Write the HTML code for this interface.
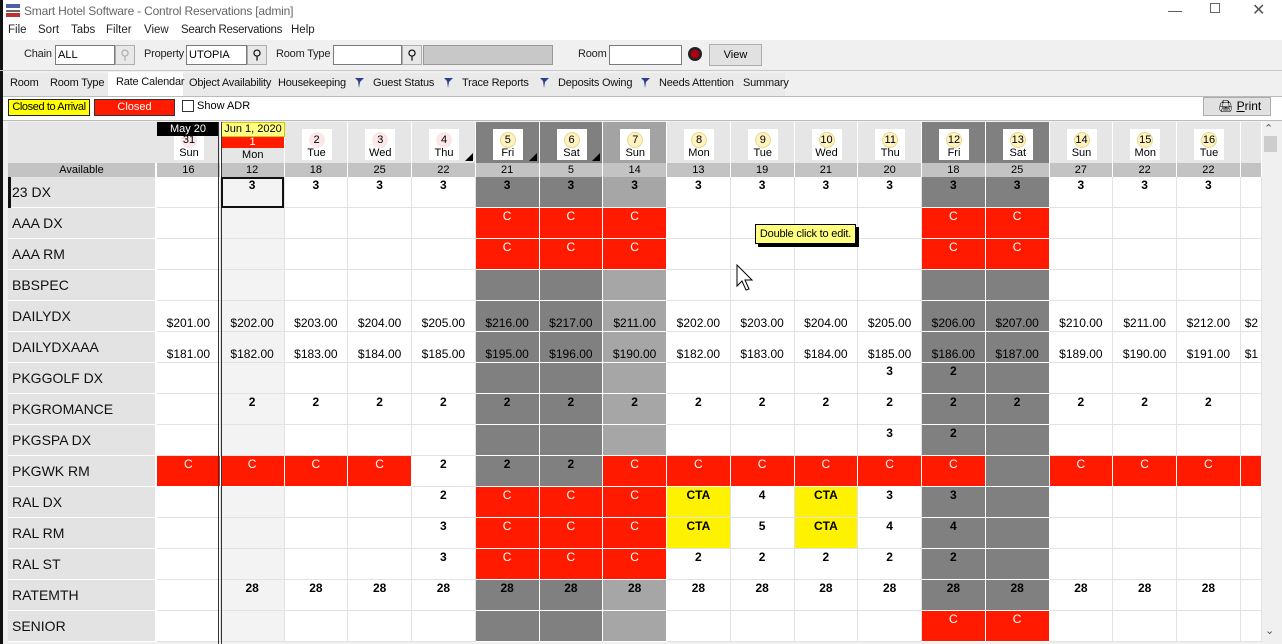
<!DOCTYPE html>
<html><head><meta charset="utf-8"><style>
*{box-sizing:border-box;margin:0;padding:0}
body{width:1282px;height:644px;overflow:hidden;background:#f0f0f0;font-family:"Liberation Sans",sans-serif;font-size:12px;color:#000;position:relative}
.a{position:absolute;white-space:nowrap}
#title{left:0;top:0;width:1282px;height:40px;background:#fff}
#lb{left:0;top:0;width:3px;height:644px;background:#111}
.tb{font-size:11px;color:#222;letter-spacing:-0.2px}
.mn{font-size:11.5px;color:#222;top:24px}
.inp{position:absolute;background:#fff;border:1px solid #7a7a7a;height:20px;font-size:11px;padding:3px 2px}
.sb{position:absolute;width:20px;height:20px;border:1px solid #adadad;background:#e8e8e8;font-size:13px;text-align:center;line-height:18px}
.tab{position:absolute;top:77px;font-size:11px;color:#111;letter-spacing:-0.2px;white-space:nowrap}
.fl{position:absolute;top:78px}
#grid{left:8px;top:177px;width:1254px}
.r{display:flex;height:31px}
.r>*{flex:none;width:63.75px;height:31px;border-right:1px solid #e2e2e2;border-bottom:1px solid #e2e2e2;text-align:center;font-style:normal;font-weight:bold;font-size:12px;padding-top:1px;background:#fff;white-space:nowrap}
.r>b{width:149px;text-align:left;font-weight:normal;font-size:14px;background:#e3e3e3;padding:7px 0 0 4px;border-right:2px solid #fff;border-bottom:1px solid #fff;color:#111}
.r>*:nth-child(3){background:#f3f3f3}
.r>*:nth-child(7),.r>*:nth-child(8),.r>*:nth-child(14),.r>*:nth-child(15){background:#808080;border-color:#fff}
.r>*:nth-child(9){background:#a6a6a6;border-color:#fff}
.r>*:nth-child(19){width:21px}
.r>i.c{background:#ff1a00!important;color:#fff;font-weight:normal;border-color:#fff}
.r>i.y{background:#fff200!important}
.p>i{font-weight:normal;padding-top:15px}
#hdr{left:157px;top:122px;display:flex}
#hdr>div{flex:none;width:63.75px;height:41px;background:#e6e6e6;border-right:1px solid #fff;position:relative;text-align:center;font-size:11px}
#hdr .d{background:#808080}
#hdr .m{background:#a3a3a3}
.ic{position:absolute;left:17px;top:7px;width:30px;height:31px;background:#fff}
.ic span{position:absolute;left:7px;top:3px;width:16px;height:16px;border-radius:50%;background:#fbe7e7}
.sun span{background:#fdf2c0;border:1px solid #e8d890}
.ic em{position:absolute;left:0;width:30px;top:6px;font-style:normal;font-size:11px;line-height:11px}
.ic u{position:absolute;left:0;width:30px;top:18px;text-decoration:none;font-size:11px}
.tri{position:absolute;right:2px;bottom:2px;width:0;height:0;border-left:8px solid transparent;border-bottom:8px solid #000}
#av{left:8px;top:163px;display:flex;height:14px}
#av>div{flex:none;width:63.75px;background:#c3c3c3;border-right:1px solid #fff;text-align:center;font-size:11px;line-height:14px}
#av>div:first-child{width:149px;border-right:2px solid #fff}
</style></head><body>
<div class="a" id="title"></div>
<div class="a" id="lb"></div>
<div class="a" style="left:6px;top:4px;width:14px;height:13px;background:linear-gradient(#4a5fa8 0 30%,#fff 30% 45%,#6a6a6a 45% 60%,#fff 60% 70%,#c03030 70%)"></div>
<div class="a" style="left:24px;top:4px;font-size:12px;color:#666;letter-spacing:-0.2px">Smart Hotel Software - Control Reservations [admin]</div>
<div class="a" style="left:1168px;top:2px;font-size:14px;color:#555">&#8212;</div>
<div class="a" style="left:1210px;top:3px;width:10px;height:10px;border:1px solid #666"></div>
<div class="a" style="left:1252px;top:0px;font-size:16px;color:#555">&#10005;</div>
<div class="a mn" style="left:8px">File</div>
<div class="a mn" style="left:38px">Sort</div>
<div class="a mn" style="left:71px">Tabs</div>
<div class="a mn" style="left:106px">Filter</div>
<div class="a mn" style="left:144px">View</div>
<div class="a mn" style="left:181px;letter-spacing:-0.3px">Search Reservations</div>
<div class="a mn" style="left:291px">Help</div>
<div class="a" style="left:0;top:70px;width:1282px;height:1px;background:#c8c8c8"></div>
<div class="a tb" style="left:24px;top:48px">Chain</div>
<div class="inp" style="left:55px;top:45px;width:60px">ALL</div>
<div class="sb" style="left:115px;top:45px;color:#aaa">&#9906;</div>
<div class="a tb" style="left:144px;top:48px">Property</div>
<div class="inp" style="left:186px;top:45px;width:61px">UTOPIA</div>
<div class="sb" style="left:247px;top:45px">&#9906;</div>
<div class="a tb" style="left:276px;top:48px">Room Type</div>
<div class="inp" style="left:333px;top:45px;width:69px"></div>
<div class="sb" style="left:402px;top:45px">&#9906;</div>
<div class="a" style="left:423px;top:45px;width:130px;height:20px;background:#c8c8c8;border:1px solid #999"></div>
<div class="a tb" style="left:578px;top:48px">Room</div>
<div class="inp" style="left:609px;top:45px;width:73px"></div>
<div class="a" style="left:688px;top:47px;width:14px;height:14px;border-radius:50%;background:radial-gradient(#b00010 40%,#222 45%)"></div>
<div class="a" style="left:709px;top:44px;width:53px;height:22px;background:#e1e1e1;border:1px solid #adadad;text-align:center;line-height:20px;font-size:11px">View</div>
<div class="a" style="left:3px;top:73px;width:782px;height:23px;background:#eaeaea"></div>
<div class="a" style="left:108px;top:72px;width:75px;height:25px;background:#fff"></div>
<div class="tab" style="left:10px">Room</div>
<div class="tab" style="left:50px">Room Type</div>
<div class="tab" style="left:116px;top:76px">Rate Calendar</div>
<div class="tab" style="left:189px">Object Availability</div>
<div class="tab" style="left:278px">Housekeeping</div>
<svg class="fl" style="left:355px" width="9" height="10"><path d="M0 0 L9 0 L5 4 L4 10 L3 3 Z" fill="#2a3f8f"/></svg>
<div class="tab" style="left:373px">Guest Status</div>
<svg class="fl" style="left:444px" width="9" height="10"><path d="M0 0 L9 0 L5 4 L4 10 L3 3 Z" fill="#2a3f8f"/></svg>
<div class="tab" style="left:462px">Trace Reports</div>
<svg class="fl" style="left:540px" width="9" height="10"><path d="M0 0 L9 0 L5 4 L4 10 L3 3 Z" fill="#2a3f8f"/></svg>
<div class="tab" style="left:558px">Deposits Owing</div>
<svg class="fl" style="left:641px" width="9" height="10"><path d="M0 0 L9 0 L5 4 L4 10 L3 3 Z" fill="#2a3f8f"/></svg>
<div class="tab" style="left:659px">Needs Attention</div>
<div class="tab" style="left:743px">Summary</div>
<div class="a" style="left:3px;top:96px;width:1279px;height:1px;background:#bbb"></div>
<div class="a" style="left:3px;top:97px;width:1279px;height:24px;background:#fff"></div>
<div class="a" style="left:8px;top:99px;width:82px;height:17px;background:#ffff00;border:1px solid #222;font-size:11px;text-align:center;line-height:15px;letter-spacing:-0.4px">Closed to Arrival</div>
<div class="a" style="left:94px;top:99px;width:81px;height:17px;background:#ff1a00;border:1px solid #333;font-size:11px;text-align:center;line-height:15px;color:#fff">Closed</div>
<div class="a" style="left:182px;top:100px;width:12px;height:12px;border:1px solid #333;background:#fff"></div>
<div class="a" style="left:197px;top:100px;font-size:11px">Show ADR</div>
<div class="a" style="left:1203px;top:97px;width:68px;height:19px;background:#e1e1e1;border:1px solid #adadad;font-size:12px;line-height:17px;padding-left:14px">&#128424; <u>P</u>rint</div>
<div class="a" style="left:3px;top:120px;width:1279px;height:1px;background:#bbb"></div>
<div class="a" style="left:8px;top:122px;width:149px;height:41px;background:#e6e6e6"></div>

<div class="a" id="hdr">
<div><div class="ic"><span></span><em>31</em><u>Sun</u></div></div>
<div><div class="ic" style="background:transparent"><u style="top:20px">Mon</u></div></div>
<div><div class="ic"><span></span><em>2</em><u>Tue</u></div></div>
<div><div class="ic"><span></span><em>3</em><u>Wed</u></div></div>
<div><div class="ic"><span></span><em>4</em><u>Thu</u></div><i class="tri"></i></div>
<div class="d"><div class="ic sun"><span></span><em>5</em><u>Fri</u></div><i class="tri"></i></div>
<div class="d"><div class="ic sun"><span></span><em>6</em><u>Sat</u></div><i class="tri"></i></div>
<div class="m"><div class="ic sun"><span></span><em>7</em><u>Sun</u></div></div>
<div><div class="ic sun"><span></span><em>8</em><u>Mon</u></div></div>
<div><div class="ic sun"><span></span><em>9</em><u>Tue</u></div></div>
<div><div class="ic sun"><span></span><em>10</em><u>Wed</u></div></div>
<div><div class="ic sun"><span></span><em>11</em><u>Thu</u></div></div>
<div class="d"><div class="ic sun"><span></span><em>12</em><u>Fri</u></div></div>
<div class="d"><div class="ic sun"><span></span><em>13</em><u>Sat</u></div></div>
<div><div class="ic sun"><span></span><em>14</em><u>Sun</u></div></div>
<div><div class="ic sun"><span></span><em>15</em><u>Mon</u></div></div>
<div><div class="ic sun"><span></span><em>16</em><u>Tue</u></div></div>
<div style="width:21px"></div>
</div>
<div class="a" style="left:157px;top:122px;width:62px;height:14px;background:#000;color:#fff;font-size:11px;text-align:center;line-height:14px">May 20</div>
<div class="a" style="left:221px;top:122px;width:64px;height:15px;background:#ffff80;border:1px solid #cc0;font-size:11px;text-align:center;line-height:13px">Jun 1, 2020</div>
<div class="a" style="left:221px;top:137px;width:63px;height:11px;background:#ff1a00;color:#fff;font-size:11px;text-align:center;line-height:11px">1</div>

<div class="a" id="av"><div>Available</div><div>16</div><div>12</div><div>18</div><div>25</div><div>22</div><div>21</div><div>5</div><div>14</div><div>13</div><div>19</div><div>21</div><div>20</div><div>18</div><div>25</div><div>27</div><div>22</div><div>22</div><div style="width:21px"></div></div>

<div class="a" id="grid">
<div class="r"><b>23 DX</b><i></i><i>3</i><i>3</i><i>3</i><i>3</i><i>3</i><i>3</i><i>3</i><i>3</i><i>3</i><i>3</i><i>3</i><i>3</i><i>3</i><i>3</i><i>3</i><i>3</i><i></i></div>
<div class="r"><b>AAA DX</b><i></i><i></i><i></i><i></i><i></i><i class="c">C</i><i class="c">C</i><i class="c">C</i><i></i><i></i><i></i><i></i><i class="c">C</i><i class="c">C</i><i></i><i></i><i></i><i></i></div>
<div class="r"><b>AAA RM</b><i></i><i></i><i></i><i></i><i></i><i class="c">C</i><i class="c">C</i><i class="c">C</i><i></i><i></i><i></i><i></i><i class="c">C</i><i class="c">C</i><i></i><i></i><i></i><i></i></div>
<div class="r"><b>BBSPEC</b><i></i><i></i><i></i><i></i><i></i><i></i><i></i><i></i><i></i><i></i><i></i><i></i><i></i><i></i><i></i><i></i><i></i><i></i></div>
<div class="r p"><b>DAILYDX</b><i>$201.00</i><i>$202.00</i><i>$203.00</i><i>$204.00</i><i>$205.00</i><i>$216.00</i><i>$217.00</i><i>$211.00</i><i>$202.00</i><i>$203.00</i><i>$204.00</i><i>$205.00</i><i>$206.00</i><i>$207.00</i><i>$210.00</i><i>$211.00</i><i>$212.00</i><i style="text-align:left;overflow:hidden;padding-left:4px">$2</i></div>
<div class="r p"><b>DAILYDXAAA</b><i>$181.00</i><i>$182.00</i><i>$183.00</i><i>$184.00</i><i>$185.00</i><i>$195.00</i><i>$196.00</i><i>$190.00</i><i>$182.00</i><i>$183.00</i><i>$184.00</i><i>$185.00</i><i>$186.00</i><i>$187.00</i><i>$189.00</i><i>$190.00</i><i>$191.00</i><i style="text-align:left;overflow:hidden;padding-left:4px">$1</i></div>
<div class="r"><b>PKGGOLF DX</b><i></i><i></i><i></i><i></i><i></i><i></i><i></i><i></i><i></i><i></i><i></i><i>3</i><i>2</i><i></i><i></i><i></i><i></i><i></i></div>
<div class="r"><b>PKGROMANCE</b><i></i><i>2</i><i>2</i><i>2</i><i>2</i><i>2</i><i>2</i><i>2</i><i>2</i><i>2</i><i>2</i><i>2</i><i>2</i><i>2</i><i>2</i><i>2</i><i>2</i><i></i></div>
<div class="r"><b>PKGSPA DX</b><i></i><i></i><i></i><i></i><i></i><i></i><i></i><i></i><i></i><i></i><i></i><i>3</i><i>2</i><i></i><i></i><i></i><i></i><i></i></div>
<div class="r"><b>PKGWK RM</b><i class="c">C</i><i class="c">C</i><i class="c">C</i><i class="c">C</i><i>2</i><i>2</i><i>2</i><i class="c">C</i><i class="c">C</i><i class="c">C</i><i class="c">C</i><i class="c">C</i><i class="c">C</i><i></i><i class="c">C</i><i class="c">C</i><i class="c">C</i><i class="c"></i></div>
<div class="r"><b>RAL DX</b><i></i><i></i><i></i><i></i><i>2</i><i class="c">C</i><i class="c">C</i><i class="c">C</i><i class="y">CTA</i><i>4</i><i class="y">CTA</i><i>3</i><i>3</i><i></i><i></i><i></i><i></i><i></i></div>
<div class="r"><b>RAL RM</b><i></i><i></i><i></i><i></i><i>3</i><i class="c">C</i><i class="c">C</i><i class="c">C</i><i class="y">CTA</i><i>5</i><i class="y">CTA</i><i>4</i><i>4</i><i></i><i></i><i></i><i></i><i></i></div>
<div class="r"><b>RAL ST</b><i></i><i></i><i></i><i></i><i>3</i><i class="c">C</i><i class="c">C</i><i class="c">C</i><i>2</i><i>2</i><i>2</i><i>2</i><i>2</i><i></i><i></i><i></i><i></i><i></i></div>
<div class="r"><b>RATEMTH</b><i></i><i>28</i><i>28</i><i>28</i><i>28</i><i>28</i><i>28</i><i>28</i><i>28</i><i>28</i><i>28</i><i>28</i><i>28</i><i>28</i><i>28</i><i>28</i><i>28</i><i></i></div>
<div class="r"><b>SENIOR</b><i></i><i></i><i></i><i></i><i></i><i></i><i></i><i></i><i></i><i></i><i></i><i></i><i class="c">C</i><i class="c">C</i><i></i><i></i><i></i><i></i></div>
</div>

<div class="a" style="left:218px;top:122px;width:4px;height:522px;border-left:1px solid #333;border-right:1px solid #333"></div>
<div class="a" style="left:221px;top:177px;width:63px;height:31px;border:2px solid #111"></div>
<div class="a" style="left:8px;top:177px;width:3px;height:31px;background:#111"></div>
<div class="a" style="left:1262px;top:122px;width:18px;height:522px;background:#f0f0f0"></div>
<div class="a" style="left:1264px;top:122px;font-size:11px;color:#555">&#8963;</div>
<div class="a" style="left:1264px;top:136px;width:13px;height:16px;background:#cdcdcd"></div>
<div class="a" style="left:1265px;top:624px;font-size:11px;color:#555">&#8964;</div>
<div class="a" style="left:758px;top:227px;width:101px;height:20px;background:#000"></div>
<div class="a" style="left:755px;top:224px;width:101px;height:20px;background:#ffff80;border:1px solid #000;font-size:11px;line-height:18px;text-align:center;letter-spacing:-0.2px">Double click to edit.</div>
<svg class="a" style="left:736px;top:264px" width="20" height="30" viewBox="0 0 20 30"><path d="M1 1 L1 22 L6 17 L10 26 L13 25 L9 16 L16 16 Z" fill="#fff" stroke="#000" stroke-width="1"/></svg>
</body></html>
